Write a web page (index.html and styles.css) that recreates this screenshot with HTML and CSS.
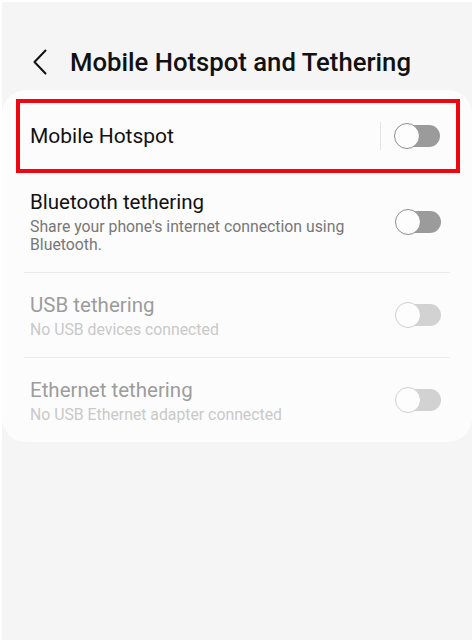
FILE: index.html
```html
<!DOCTYPE html>
<html>
<head>
<meta charset="utf-8">
<link rel="stylesheet" href="styles.css">
</head>
<body>
<div class="screen">
  <header class="header">
    <svg class="back" width="16" height="26" viewBox="0 0 16 26"><path d="M13.5 1.5 L2.5 13 L13.5 24.5" fill="none" stroke="#111" stroke-width="2" stroke-linecap="round" stroke-linejoin="round"/></svg>
    <h1 class="title">Mobile Hotspot and Tethering</h1>
  </header>
  <section class="card">
    <div class="row-main highlight">
      <div class="label">Mobile Hotspot</div>
      <div class="vsep"></div>
      <div class="toggle"><span class="knob"></span></div>
    </div>
    <div class="row row-bt">
      <div class="texts">
        <div class="label">Bluetooth tethering</div>
        <div class="sub">Share your phone's internet connection using Bluetooth.</div>
      </div>
      <div class="toggle"><span class="knob"></span></div>
    </div>
    <div class="divider"></div>
    <div class="row disabled">
      <div class="texts">
        <div class="label">USB tethering</div>
        <div class="sub">No USB devices connected</div>
      </div>
      <div class="toggle"><span class="knob"></span></div>
    </div>
    <div class="divider"></div>
    <div class="row disabled">
      <div class="texts">
        <div class="label">Ethernet tethering</div>
        <div class="sub">No USB Ethernet adapter connected</div>
      </div>
      <div class="toggle"><span class="knob"></span></div>
    </div>
  </section>
</div>
</body>
</html>
```
FILE: styles.css
```css
html, body {
  margin: 0;
  padding: 0;
  background: #ffffff;
}
body {
  width: 474px;
  height: 643px;
  font-family: Roboto, "Noto Sans", sans-serif;
  overflow: hidden;
}
.screen {
  margin: 2px 2px 0 2px;
  height: 638px;
  background: #f5f5f5;
}
.header {
  display: flex;
  align-items: center;
  height: 88px;
  padding: 31px 0 0 30px;
  box-sizing: border-box;
}
.back {
  display: block;
  margin-right: 22px;
}
.title {
  margin: 0;
  font-size: 25.7px;
  font-weight: 500;
  color: #111;
  line-height: 30px;
}
.card {
  background: #fcfcfc;
  border-radius: 24px;
  padding-top: 9px;
  height: 352px;
  box-sizing: border-box;
}
.row-main {
  display: flex;
  align-items: center;
  box-sizing: border-box;
  height: 74px;
  margin: 0 12px 0 13.5px;
  padding: 0 16px 0 10.5px;
}
.highlight {
  border: 4px solid #ee0711;
}
.row-main .label {
  flex: 1;
  font-size: 21px;
}
.vsep {
  width: 1px;
  height: 28px;
  background: #e4e4e4;
  margin-right: 13px;
}
.row {
  display: flex;
  align-items: center;
  padding: 0 31px 0 28px;
}
.row-bt {
  padding-top: 16px;
  padding-bottom: 18px;
}
.label {
  font-size: 20.5px;
  color: #111;
  line-height: 26px;
}
.texts {
  flex: 1;
  padding-right: 30px;
}
.sub {
  font-size: 15.8px;
  color: #777;
  line-height: 18px;
  margin-top: 3px;
}
.disabled {
  height: 84px;
}
.disabled .label {
  color: #9c9c9c;
}
.disabled .sub {
  color: #c9c9c9;
}
.divider {
  height: 1px;
  background: #ececec;
  margin: 0 22px;
}
.toggle {
  position: relative;
  width: 46px;
  height: 26px;
  flex: none;
}
.toggle::before {
  content: "";
  position: absolute;
  left: 8px;
  right: 0;
  top: 2px;
  bottom: 2px;
  background: #9b9b9b;
  border-radius: 11px;
}
.disabled .toggle::before {
  background: #d2d2d2;
}
.knob {
  position: absolute;
  left: 0;
  top: 0;
  width: 26px;
  height: 26px;
  box-sizing: border-box;
  border-radius: 50%;
  background: #fdfdfd;
  border: 1.5px solid #8e8e8e;
}
.disabled .knob {
  border-color: #cfcfcf;
}
```
